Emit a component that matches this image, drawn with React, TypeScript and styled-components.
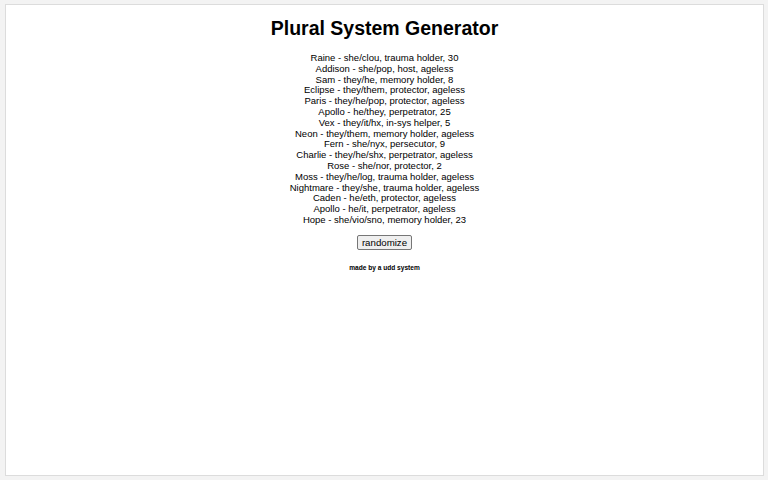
import React from 'react';
import styled, { createGlobalStyle } from 'styled-components';

const GlobalStyle = createGlobalStyle`
  html, body {
    margin: 0;
    padding: 0;
    background: #f3f3f3;
  }
  body {
    font-family: "Liberation Sans", Arial, sans-serif;
  }
`;

const Page = styled.div`
  padding: 4px 4px 4px 5px;
  height: 480px;
  box-sizing: border-box;
`;

const Panel = styled.main`
  height: 100%;
  box-sizing: border-box;
  background: #ffffff;
  border: 1px solid #dcdcdc;
  display: flex;
  flex-direction: column;
  align-items: center;
  padding-top: 11px;
`;

const Title = styled.h1`
  margin: 0 0 13px;
  font-size: 19.5px;
  font-weight: bold;
  color: #000;
  line-height: 24px;
`;

const List = styled.div`
  display: flex;
  flex-direction: column;
  align-items: center;
  font-size: 9.5px;
  line-height: 10.8px;
  color: #000;
`;

const Alter = styled.div``;

const Button = styled.button`
  margin-top: 9px;
  font-family: "Liberation Sans", Arial, sans-serif;
  font-size: 9.7px;
  padding: 1px 4px;
  background: #efefef;
  border: 1px solid #767676;
  border-radius: 2px;
  color: #000;
`;

const Credit = styled.p`
  margin: 14px 0 0;
  font-size: 6.6px;
  font-weight: bold;
  color: #000;
`;

const alters = [
  'Raine - she/clou, trauma holder, 30',
  'Addison - she/pop, host, ageless',
  'Sam - they/he, memory holder, 8',
  'Eclipse - they/them, protector, ageless',
  'Paris - they/he/pop, protector, ageless',
  'Apollo - he/they, perpetrator, 25',
  'Vex - they/it/hx, in-sys helper, 5',
  'Neon - they/them, memory holder, ageless',
  'Fern - she/nyx, persecutor, 9',
  'Charlie - they/he/shx, perpetrator, ageless',
  'Rose - she/nor, protector, 2',
  'Moss - they/he/log, trauma holder, ageless',
  'Nightmare - they/she, trauma holder, ageless',
  'Caden - he/eth, protector, ageless',
  'Apollo - he/it, perpetrator, ageless',
  'Hope - she/vio/sno, memory holder, 23',
];

export default function App() {
  return (
    <>
      <GlobalStyle />
      <Page>
        <Panel>
          <Title>Plural System Generator</Title>
          <List>
            {alters.map((a, i) => (
              <Alter key={i}>{a}</Alter>
            ))}
          </List>
          <Button type="button">randomize</Button>
          <Credit>made by a udd system</Credit>
        </Panel>
      </Page>
    </>
  );
}
